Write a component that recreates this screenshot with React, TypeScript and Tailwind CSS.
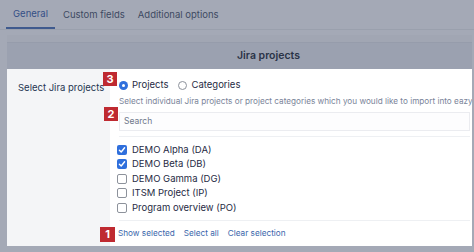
import React from "react";

const Check = ({ checked }: { checked: boolean }) =>
  checked ? (
    <span className="w-[10px] h-[10px] rounded-[2px] bg-[#2f6fdc] flex items-center justify-center shrink-0">
      <svg width="8" height="8" viewBox="0 0 8 8">
        <path d="M1.4 4.2 L3.2 6 L6.6 1.8" fill="none" stroke="#fff" strokeWidth="1.4" strokeLinecap="round" strokeLinejoin="round" />
      </svg>
    </span>
  ) : (
    <span className="block w-[10px] h-[10px] rounded-[2px] border border-[#8d929b] bg-white shrink-0" />
  );

const Badge = ({ n, cls }: { n: string; cls: string }) => (
  <div className={"absolute bg-[#bf2a31] text-white font-bold text-[11px] leading-none flex items-center justify-center " + cls}>
    {n}
  </div>
);

export default function App() {
  const items: [string, boolean][] = [
    ["DEMO Alpha (DA)", true],
    ["DEMO Beta (DB)", true],
    ["DEMO Gamma (DG)", false],
    ["ITSM Project (IP)", false],
    ["Program overview (PO)", false],
  ];
  return (
    <div className="relative w-[474px] h-[252px] overflow-hidden bg-[#a4a9b6] font-['Inter',sans-serif]">
      {/* tabs */}
      <div className="h-[30px] border-b border-[#9aa0ad] flex items-end px-[6px] gap-[8px] text-[9.5px] text-[#3e4a62]">
        <div className="h-full flex items-center px-[7px] border-b-[2px] border-[#3f5a8e] text-[#354f86] pt-[2px]">General</div>
        <div className="h-full flex items-center pt-[2px]">Custom fields</div>
        <div className="h-full flex items-center pl-[5px] pt-[2px]">Additional options</div>
      </div>
      {/* panel */}
      <div className="mt-[5px] ml-[7px] mr-[2px] bg-[#a1a6b3]">
        <div className="h-[7px]" />
        <div className="h-[27px] bg-[#9ba1b0] border-t border-[#969cab] flex items-center pl-[230px] text-[10.5px] font-semibold text-[#2a3347]">
          Jira projects
        </div>
        <div className="h-[177px] flex">
          <div className="w-[103px] shrink-0 bg-[#f4f5f7] pl-[11px] pt-[14px] text-[9.5px] leading-[10px] text-[#253552] whitespace-nowrap">
            Select Jira projects
          </div>
          <div className="flex-1 min-w-0 overflow-hidden bg-white pl-[9px] pr-[2px] pt-[9px] text-[9.5px] text-[#1f2b44]">
            <div className="h-[14px] flex items-center">
              <span className="w-[9px] h-[9px] rounded-full bg-[#2f6fdc] flex items-center justify-center shrink-0">
                <span className="block w-[3px] h-[3px] rounded-full bg-white" />
              </span>
              <span className="ml-[4px]">Projects</span>
              <span className="block ml-[10px] w-[9px] h-[9px] rounded-full border border-[#8d929b] shrink-0" />
              <span className="ml-[4px]">Categories</span>
            </div>
            <div className="mt-[4px] h-[10px] leading-[10px] text-[8.2px] text-[#7a8499] whitespace-nowrap">
              Select individual Jira projects or project categories which you would like to import into eazyBI
            </div>
            <div className="mt-[6px] h-[19px] border border-[#ebecf0] bg-[#fdfdfe] flex items-center pl-[4px] text-[8.5px] text-[#6f788b]">
              Search
            </div>
            <div className="mt-[5px] border-t border-[#eef0f3]" />
            <div className="pt-[5.5px]">
              {items.map(([t, c]) => (
                <div key={t} className="h-[14.5px] flex items-center">
                  <span className="block -ml-[2px]"><Check checked={c} /></span>
                  <span className="ml-[5px]">{t}</span>
                </div>
              ))}
            </div>
            <div className="mt-[5px] border-t border-[#eef0f3]" />
            <div className="pt-[7px] h-[10px] leading-[10px] flex gap-[9px] text-[8.2px] text-[#3a66ab] whitespace-nowrap">
              <span className="-ml-[1px]">Show selected</span>
              <span>Select all</span>
              <span>Clear selection</span>
            </div>
          </div>
        </div>
      </div>
      <Badge n="3" cls="left-[103px] top-[72px] w-[14px] h-[14px]" />
      <Badge n="2" cls="left-[104px] top-[107px] w-[14px] h-[14px]" />
      <Badge n="1" cls="left-[100px] top-[227px] w-[15px] h-[15px]" />
    </div>
  );
}
